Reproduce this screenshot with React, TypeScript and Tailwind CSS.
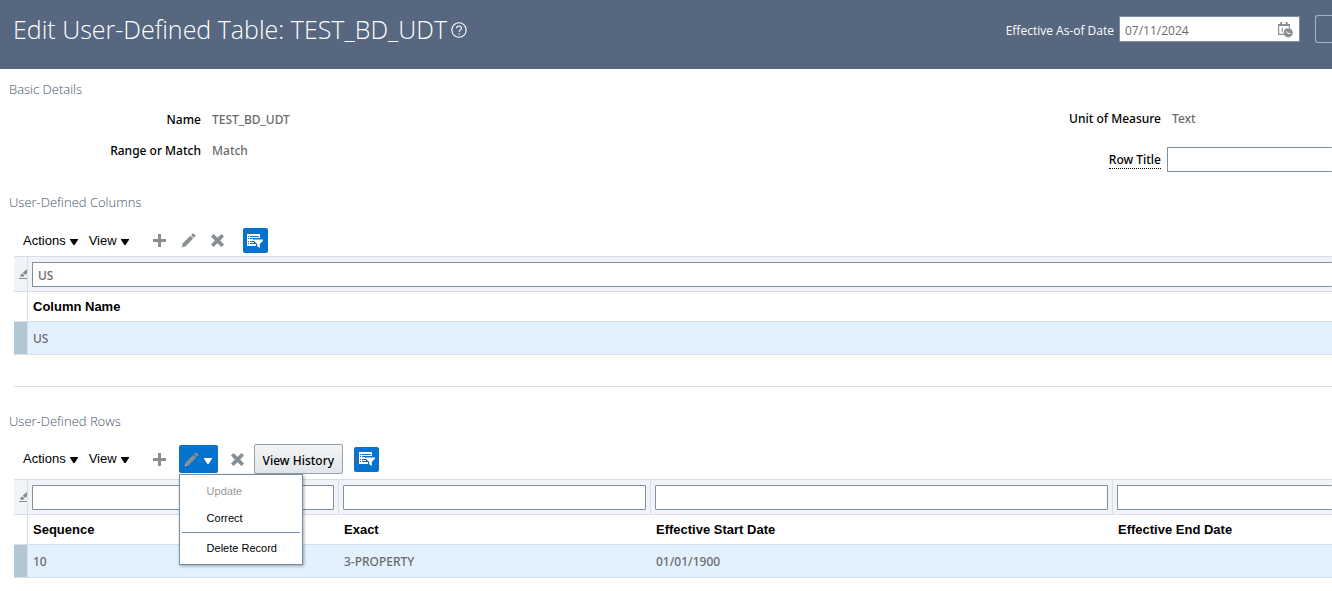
import type { ReactNode } from "react";

const inputBox = "h-[25px] rounded-[1px] border border-[#7c909d] bg-white px-[5px] pt-[2px] font-['Noto_Sans',sans-serif] text-[12px] font-medium text-[#6b6b6b] outline-none";

function Caret({ className = "" }: { className?: string }) {
  return (
    <svg width="8" height="6" viewBox="0 0 8 6" fill="currentColor" className={className} aria-hidden="true">
      <path d="M0 0h8v.8L4.6 6H3.4L0 .8z" />
    </svg>
  );
}

function PlusIcon() {
  return (
    <svg width="13" height="13" viewBox="0 0 13 13" fill="#878f93" aria-hidden="true">
      <path d="M5 0h3v5h5v3H8v5H5V8H0V5h5z" />
    </svg>
  );
}

function PencilIcon() {
  return (
    <svg width="15" height="15" viewBox="0 0 15 15" fill="#878f93" aria-hidden="true">
      <path d="M.5 14.500 1.600 10.600 9.400 2.800 12.200 5.600 4.400 13.400zM10.100 2.100 11.400.8q.7-.6 1.400 0l1.400 1.400q.6.7 0 1.400l-1.300 1.300z" />
      <path d="M.9 14.100 1.500 12.300 2.700 13.500z" fill="#fff" opacity=".5" />
    </svg>
  );
}

function CrossIcon() {
  return (
    <svg width="13" height="13" viewBox="0 0 13 13" fill="#878f93" aria-hidden="true">
      <path d="M2.500 0 6.500 3.800 10.500 0 13 2.500 9.200 6.500 13 10.500 10.500 13 6.500 9.200 2.500 13 0 10.500 3.800 6.500 0 2.500z" />
    </svg>
  );
}

function FilterIcon() {
  return (
    <svg width="16" height="14" viewBox="0 0 16 14" aria-hidden="true">
      <path d="M0 0h13v5H0zM0 5h7v7H0zM7 10h2v2H7z" fill="#fff" />
      <path d="M1 2h1v1H1zM3 2h9v1H3zM1 4h1v1H1zM3 4h10v1H3zM1 7h1v1H1zM3 7h5v1H3zM1 9h1v1H1zM3 9h6v1H3z" fill="#0572ce" />
      <path d="M5.500 4.500H16v3L13.500 10.500V14h-1L9.500 12v-2z" fill="#0572ce" />
      <path d="M6.800 5.500H16v1.200L12.800 10v4l-2.600-1.700V10L6.800 6.700z" fill="#fff" />
    </svg>
  );
}

function EraserIcon() {
  return (
    <svg width="8" height="10" viewBox="0 0 8 10" fill="#878f93" aria-hidden="true">
      <path d="M8 0v4.200L6.200 6 3.700 3.500zM3.100 4.200 5.500 6.600 4.200 7.800H2L1 6.600zM0 9h8v1H0z" />
    </svg>
  );
}

function CalendarIcon() {
  return (
    <svg width="15" height="16" viewBox="0 0 15 16" fill="none" aria-hidden="true">
      <path d="M6 12.400H.6V2.500h10.800V6" stroke="#878f93" strokeWidth="1.200" />
      <path d="M0 2h12v2H0zM2.200 0H4v3H2.200zM7.800 0h1.800v3H7.800zM3 6.500l1.700-.8v4.500H3.600V7z" fill="#878f93" />
      <circle cx="10.200" cy="10.800" r="4.600" fill="#878f93" />
      <path d="M8.300 9.300 10 11.400h2.500" stroke="#fff" />
    </svg>
  );
}

function HelpIcon() {
  return (
    <svg width="16" height="16" viewBox="0 0 16 16" fill="none" stroke="#fff" strokeWidth="1.100" aria-hidden="true">
      <circle cx="8" cy="8" r="7.200" />
      <path d="M5.600 6.300C5.600 3.200 10.500 3.200 10.500 6.100 10.500 8 8.100 7.900 8.100 10" />
      <path d="M8.100 11.200v1.500" />
    </svg>
  );
}

function IconButton({ label, children }: { label: string; children: ReactNode }) {
  return (
    <button type="button" aria-label={label} className="flex size-[15px] items-center justify-center">
      {children}
    </button>
  );
}

function TextMenus() {
  return (
    <div className="mr-[23px] flex gap-[11px] font-['Liberation_Sans',sans-serif] text-[13px] leading-[16px]">
      {["Actions", "View"].map((name) => (
        <button key={name} type="button" className="flex items-center gap-[4px]">
          {name}
          <Caret className="mt-[2px]" />
        </button>
      ))}
    </div>
  );
}

function FilterToggle() {
  return (
    <button type="button" aria-label="Query by example" className="flex size-[25px] items-center justify-center rounded-[2px] bg-[#0572ce]">
      <FilterIcon />
    </button>
  );
}

function SectionTitle({ children }: { children: ReactNode }) {
  return <h2 className="px-[9px] font-['Open_Sans',sans-serif] text-[13px] leading-[20px] font-light text-[#44546b]">{children}</h2>;
}

function EditMenu() {
  return (
    <div className="relative">
      <button type="button" aria-label="Edit" aria-haspopup="menu" aria-expanded="true" className="flex h-7 w-[39px] items-center gap-[5px] rounded-[2px] bg-[#0572ce] px-[5px] text-white">
        <PencilIcon />
        <Caret className="mt-1" />
      </button>
      <div role="menu" className="absolute top-[29px] left-0 z-10 w-[124px] border border-[#7590a3] bg-white px-[2px] pt-[3px] font-['Liberation_Sans',sans-serif] text-[11px] leading-[27px] shadow-[1px_1px_3px_rgba(0,0,0,0.35)]">
        <button type="button" role="menuitem" disabled className="block w-full pl-[25px] text-left text-[#999]">Update</button>
        <button type="button" role="menuitem" className="block w-full pl-[25px] text-left">Correct</button>
        <button type="button" role="menuitem" className="block w-full border-t border-[#7590a3] py-[2px] pl-[25px] text-left">Delete Record</button>
      </div>
    </div>
  );
}

type Column = { name: string; width: string; query: string; value: string };

function DataTable({ label, columns }: { label: string; columns: Column[] }) {
  return (
    <div className="pl-[14px]">
      <table aria-label={label} className="w-full table-fixed border-separate border-spacing-0 text-left">
        <colgroup>
          <col className="w-[14px]" />
          {columns.map((c) => <col key={c.name} className={c.width} />)}
        </colgroup>
        <thead>
          <tr className="h-[36px] bg-[#f1f3f8]">
            <td className="border-y border-r border-[#d6dfe6] p-0">
              <button type="button" aria-label="Clear filters" className="ml-[5px] block"><EraserIcon /></button>
            </td>
            {columns.map((c, i) => {
              const last = i === columns.length - 1;
              return (
                <td key={c.name} className={`border-y border-[#d6dfe6] py-0 pl-[4px] ${last ? "pr-0" : "border-r pr-[4px]"}`}>
                  <input aria-label={`Filter ${c.name}`} defaultValue={c.query} className={`${inputBox} block w-full ${last ? "border-r-0" : ""}`} />
                </td>
              );
            })}
          </tr>
          <tr className="h-[30px]">
            <td className="border-r border-b border-[#d6dfe6]" />
            {columns.map((c) => (
              <th key={c.name} scope="col" className="border-b border-[#d6dfe6] px-[5px] py-0 font-['Liberation_Sans',sans-serif] text-[13px] leading-[20px] font-bold">{c.name}</th>
            ))}
          </tr>
        </thead>
        <tbody>
          <tr className="h-[33px] bg-[#e3f1fe] text-[12px] leading-[18px] font-medium text-[#6b6b6b]">
            <td className="border-r border-b border-[#d6dfe6] bg-[#b3c6d4]" />
            {columns.map((c) => <td key={c.name} className="border-b border-[#d6dfe6] px-[5px] pt-[2px] pb-0">{c.value}</td>)}
          </tr>
        </tbody>
      </table>
    </div>
  );
}

export default function App() {
  return (
    <main className="min-h-screen overflow-hidden bg-white font-['Noto_Sans',sans-serif] text-black">
      <header className="flex h-[69px] justify-between bg-[#56677f] font-['Open_Sans',sans-serif] text-white">
        <div className="flex items-center gap-[4px] pb-[11px] pl-[13px]">
          <h1 className="text-[25px] leading-[34px] font-light whitespace-nowrap">Edit User-Defined Table: TEST_BD_UDT</h1>
          <button type="button" aria-label="Help" className="mt-[2px]"><HelpIcon /></button>
        </div>
        <div className="flex items-center pb-[11px]">
          <label htmlFor="effective-date" className="mr-[5px] pt-[3px] text-[12px]">Effective As-of Date</label>
          <div className="flex h-[26px] w-[181px] items-center border border-[#7c909d] bg-white pr-[6px]">
            <input id="effective-date" defaultValue="07/11/2024" className="min-w-0 flex-1 px-[5px] pt-[3px] text-[12px] font-medium text-[#6b6b6b] outline-none" />
            <button type="button" aria-label="Select date" className="pt-[2px]"><CalendarIcon /></button>
          </div>
          <button type="button" aria-label="More" className="ml-[15px] h-7 w-[17px] rounded-l-[3px] border border-r-0 border-[#a8b3c2]" />
        </div>
      </header>

      <section className="pt-[10px]">
        <SectionTitle>Basic Details</SectionTitle>
        <div className="flex justify-between pt-[10px] text-[12px] leading-[20px] font-medium">
          <dl className="grid grid-cols-[201px_auto] content-start gap-x-[11px] gap-y-[11px] pt-px">
            <dt className="text-right">Name</dt>
            <dd className="text-[#6b6b6b]">TEST_BD_UDT</dd>
            <dt className="text-right">Range or Match</dt>
            <dd className="text-[#6b6b6b]">Match</dd>
          </dl>
          <div className="w-[264px]">
            <dl className="flex gap-[11px]">
              <dt className="flex w-[93px] justify-end whitespace-nowrap">Unit of Measure</dt>
              <dd className="text-[#6b6b6b]">Text</dd>
            </dl>
            <div className="mt-[18px] flex items-center">
              <div className="flex w-[99px] justify-end pr-[6px]">
                <label htmlFor="row-title" className="border-b border-dotted border-black leading-[17px]">Row Title</label>
              </div>
              <input id="row-title" className={`${inputBox} min-w-0 flex-1 border-r-0`} />
            </div>
          </div>
        </div>
      </section>

      <section className="pt-[20px]">
        <SectionTitle>User-Defined Columns</SectionTitle>
        <div className="flex h-[44px] items-center pt-[13px] pl-[23px]">
          <TextMenus />
          <div className="mr-[18px] flex gap-[14px]">
            <IconButton label="Add"><PlusIcon /></IconButton>
            <IconButton label="Edit"><PencilIcon /></IconButton>
            <IconButton label="Delete"><CrossIcon /></IconButton>
          </div>
          <FilterToggle />
        </div>
        <DataTable label="User-Defined Columns" columns={[{ name: "Column Name", width: "w-auto", query: "US", value: "US" }]} />
        <hr className="mt-[31px] ml-[14px] border-[#d6dfe6]" />
      </section>

      <section className="pt-[24px]">
        <SectionTitle>User-Defined Rows</SectionTitle>
        <div className="flex h-[48px] items-center pt-[8px] pl-[23px]">
          <TextMenus />
          <IconButton label="Add"><PlusIcon /></IconButton>
          <div className="mr-[12px] ml-[12px]"><EditMenu /></div>
          <IconButton label="Delete"><CrossIcon /></IconButton>
          <button type="button" className="mr-[11px] ml-[9px] h-[30px] rounded-[2px] border border-[#94a3ae] bg-linear-to-b from-[#f2f4f5] to-[#e2e6ea] px-[8px] pt-[3px] text-[12px] font-medium whitespace-nowrap">View History</button>
          <FilterToggle />
        </div>
        <DataTable
          label="User-Defined Rows"
          columns={[
            { name: "Sequence", width: "w-[311px]", query: "", value: "10" },
            { name: "Exact", width: "w-[312px]", query: "", value: "3-PROPERTY" },
            { name: "Effective Start Date", width: "w-[462px]", query: "", value: "01/01/1900" },
            { name: "Effective End Date", width: "w-auto", query: "", value: "" },
          ]}
        />
      </section>
    </main>
  );
}
